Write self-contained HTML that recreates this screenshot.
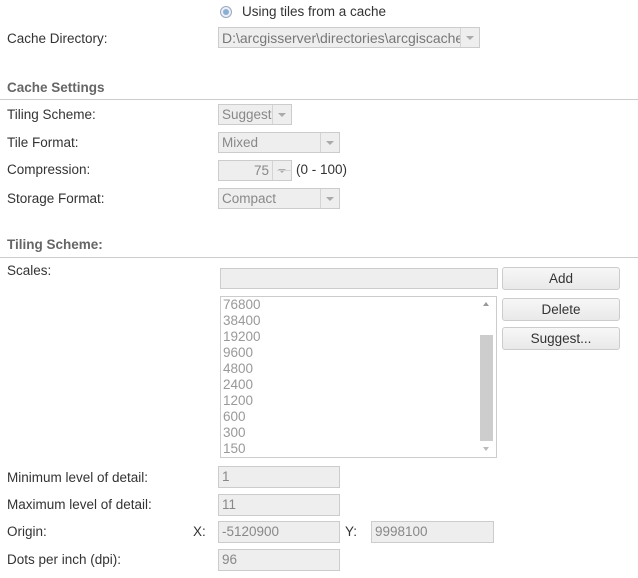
<!DOCTYPE html><html><head><style>
body{margin:0;width:638px;height:578px;background:#fff;font-family:"Liberation Sans",sans-serif;font-size:13.5px;color:#333;position:relative;overflow:hidden}
.a{position:absolute;white-space:nowrap;line-height:16px;margin-top:1px}
.b{position:absolute;box-sizing:border-box;border:1px solid #ccc;background:#eee;color:#888;padding-left:3px;line-height:20px;white-space:nowrap;overflow:hidden}
.dd{position:absolute;right:0;top:0;bottom:0;width:18px;border-left:1px solid #d4d4d4;background:#eee}
.dd:after{content:"";position:absolute;left:5px;top:8px;border:4px solid transparent;border-top:4px solid #aaa;border-bottom:0}
.h{position:absolute;font-weight:bold;color:#666;line-height:16px;margin-top:1px}
.ln{position:absolute;left:0;width:638px;height:1px;background:#ccc}
.btn{position:absolute;box-sizing:border-box;border:1px solid #ccc;border-radius:3px;background:linear-gradient(#f7f7f7,#e9e9e9);text-align:center;color:#333;line-height:21px}
</style></head><body>
<div style="position:absolute;left:220px;top:6px;width:10px;height:10px;border:1px solid #9ab;border-radius:50%;background:#eef"></div>
<div style="position:absolute;left:223px;top:9px;width:6px;height:6px;border-radius:50%;background:#8ab0d0"></div>
<div class="a" style="left:242px;top:3px">Using tiles from a cache</div>
<div class="a" style="left:7px;top:30px">Cache Directory:</div>
<div class="b" style="left:218px;top:27px;width:262px;height:21px;color:#777;font-size:14px">D:\arcgisserver\directories\arcgiscache<div class="dd"></div></div>
<div class="h" style="left:7px;top:79px">Cache Settings</div>
<div class="ln" style="top:99px"></div>
<div class="a" style="left:7px;top:106px">Tiling Scheme:</div>
<div class="b" style="left:218px;top:104px;width:74px;height:21px">Suggest<div class="dd"></div></div>
<div class="a" style="left:7px;top:134px">Tile Format:</div>
<div class="b" style="left:218px;top:132px;width:122px;height:21px">Mixed<div class="dd"></div></div>
<div class="a" style="left:7px;top:161px">Compression:</div>
<div class="b" style="left:218px;top:160px;width:74px;height:21px;text-align:right;padding-right:22px">75<div class="dd" style="background:#eee"></div></div>
<div style="position:absolute;left:277px;top:170px;width:15px;height:1px;background:#d4d4d4"></div>
<div class="a" style="left:296px;top:161px">(0 - 100)</div>
<div class="a" style="left:7px;top:190px">Storage Format:</div>
<div class="b" style="left:218px;top:188px;width:122px;height:21px">Compact<div class="dd"></div></div>
<div class="h" style="left:7px;top:236px">Tiling Scheme:</div>
<div class="ln" style="top:257px"></div>
<div class="a" style="left:7px;top:262px">Scales:</div>
<div class="b" style="left:220px;top:268px;width:278px;height:21px"></div>
<div class="btn" style="left:502px;top:267px;width:118px;height:23px">Add</div>
<div class="btn" style="left:502px;top:298px;width:118px;height:23px">Delete</div>
<div class="btn" style="left:502px;top:327px;width:118px;height:23px">Suggest...</div>
<div style="position:absolute;left:220px;top:296px;width:277px;height:162px;box-sizing:border-box;border:1px solid #ccc;background:#fff;color:#999;padding:0 2px;line-height:16px">76800<br>38400<br>19200<br>9600<br>4800<br>2400<br>1200<br>600<br>300<br>150</div>
<div style="position:absolute;left:480px;top:335px;width:13px;height:106px;background:#cdcdcd"></div>
<div style="position:absolute;left:483px;top:302px;border:3px solid transparent;border-bottom:4px solid #999;border-top:0"></div>
<div style="position:absolute;left:483px;top:447px;border:3px solid transparent;border-top:4px solid #bbb;border-bottom:0"></div>
<div class="a" style="left:7px;top:469px">Minimum level of detail:</div>
<div class="b" style="left:218px;top:466px;width:122px;height:22px">1</div>
<div class="a" style="left:7px;top:496px">Maximum level of detail:</div>
<div class="b" style="left:218px;top:494px;width:122px;height:22px">11</div>
<div class="a" style="left:7px;top:523px">Origin:</div>
<div class="a" style="left:193px;top:523px">X:</div>
<div class="b" style="left:218px;top:521px;width:122px;height:22px">-5120900</div>
<div class="a" style="left:345px;top:523px">Y:</div>
<div class="b" style="left:371px;top:521px;width:123px;height:22px">9998100</div>
<div class="a" style="left:7px;top:551px">Dots per inch (dpi):</div>
<div class="b" style="left:218px;top:549px;width:122px;height:22px">96</div>
</body></html>
